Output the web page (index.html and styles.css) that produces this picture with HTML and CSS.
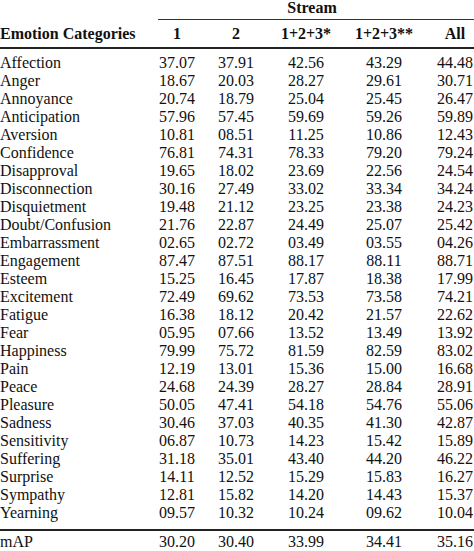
FILE: index.html
```html
<!DOCTYPE html>
<html>
<head>
<meta charset="utf-8">
<link rel="stylesheet" href="styles.css">
</head>
<body>
<div class="frame">
<table class="results">
  <colgroup>
    <col class="c0"><col class="c1"><col class="c2"><col class="c3"><col class="c4"><col class="c5">
  </colgroup>
  <thead>
    <tr class="group-row">
      <th class="blank"></th>
      <th class="group" colspan="5">Stream</th>
    </tr>
    <tr class="head-row">
      <th class="cat">Emotion Categories</th>
      <th>1</th>
      <th>2</th>
      <th>1+2+3*</th>
      <th>1+2+3**</th>
      <th>All</th>
    </tr>
  </thead>
  <tbody class="data">
    <tr class="first"><td class="cat">Affection</td><td>37.07</td><td>37.91</td><td>42.56</td><td>43.29</td><td>44.48</td></tr>
    <tr><td class="cat">Anger</td><td>18.67</td><td>20.03</td><td>28.27</td><td>29.61</td><td>30.71</td></tr>
    <tr><td class="cat">Annoyance</td><td>20.74</td><td>18.79</td><td>25.04</td><td>25.45</td><td>26.47</td></tr>
    <tr><td class="cat">Anticipation</td><td>57.96</td><td>57.45</td><td>59.69</td><td>59.26</td><td>59.89</td></tr>
    <tr><td class="cat">Aversion</td><td>10.81</td><td>08.51</td><td>11.25</td><td>10.86</td><td>12.43</td></tr>
    <tr><td class="cat">Confidence</td><td>76.81</td><td>74.31</td><td>78.33</td><td>79.20</td><td>79.24</td></tr>
    <tr><td class="cat">Disapproval</td><td>19.65</td><td>18.02</td><td>23.69</td><td>22.56</td><td>24.54</td></tr>
    <tr><td class="cat">Disconnection</td><td>30.16</td><td>27.49</td><td>33.02</td><td>33.34</td><td>34.24</td></tr>
    <tr><td class="cat">Disquietment</td><td>19.48</td><td>21.12</td><td>23.25</td><td>23.38</td><td>24.23</td></tr>
    <tr><td class="cat">Doubt/Confusion</td><td>21.76</td><td>22.87</td><td>24.49</td><td>25.07</td><td>25.42</td></tr>
    <tr><td class="cat">Embarrassment</td><td>02.65</td><td>02.72</td><td>03.49</td><td>03.55</td><td>04.26</td></tr>
    <tr><td class="cat">Engagement</td><td>87.47</td><td>87.51</td><td>88.17</td><td>88.11</td><td>88.71</td></tr>
    <tr><td class="cat">Esteem</td><td>15.25</td><td>16.45</td><td>17.87</td><td>18.38</td><td>17.99</td></tr>
    <tr><td class="cat">Excitement</td><td>72.49</td><td>69.62</td><td>73.53</td><td>73.58</td><td>74.21</td></tr>
    <tr><td class="cat">Fatigue</td><td>16.38</td><td>18.12</td><td>20.42</td><td>21.57</td><td>22.62</td></tr>
    <tr><td class="cat">Fear</td><td>05.95</td><td>07.66</td><td>13.52</td><td>13.49</td><td>13.92</td></tr>
    <tr><td class="cat">Happiness</td><td>79.99</td><td>75.72</td><td>81.59</td><td>82.59</td><td>83.02</td></tr>
    <tr><td class="cat">Pain</td><td>12.19</td><td>13.01</td><td>15.36</td><td>15.00</td><td>16.68</td></tr>
    <tr><td class="cat">Peace</td><td>24.68</td><td>24.39</td><td>28.27</td><td>28.84</td><td>28.91</td></tr>
    <tr><td class="cat">Pleasure</td><td>50.05</td><td>47.41</td><td>54.18</td><td>54.76</td><td>55.06</td></tr>
    <tr><td class="cat">Sadness</td><td>30.46</td><td>37.03</td><td>40.35</td><td>41.30</td><td>42.87</td></tr>
    <tr><td class="cat">Sensitivity</td><td>06.87</td><td>10.73</td><td>14.23</td><td>15.42</td><td>15.89</td></tr>
    <tr><td class="cat">Suffering</td><td>31.18</td><td>35.01</td><td>43.40</td><td>44.20</td><td>46.22</td></tr>
    <tr><td class="cat">Surprise</td><td>14.11</td><td>12.52</td><td>15.29</td><td>15.83</td><td>16.27</td></tr>
    <tr><td class="cat">Sympathy</td><td>12.81</td><td>15.82</td><td>14.20</td><td>14.43</td><td>15.37</td></tr>
    <tr class="last"><td class="cat">Yearning</td><td>09.57</td><td>10.32</td><td>10.24</td><td>09.62</td><td>10.04</td></tr>
  </tbody>
  <tfoot>
    <tr class="total"><td class="cat">mAP</td><td>30.20</td><td>30.40</td><td>33.99</td><td>34.41</td><td>35.16</td></tr>
  </tfoot>
</table>
</div>
</body>
</html>
```

FILE: styles.css
```css
html, body {
  margin: 0;
  padding: 0;
  background: #ffffff;
}

.frame {
  width: 474px;
  height: 551px;
  overflow: hidden;
}

.results {
  border-collapse: separate;
  border-spacing: 0;
  table-layout: fixed;
  width: 478px;
  font-family: "Liberation Serif", "Times New Roman", serif;
  font-size: 16px;
  color: #111111;
}

.c0 { width: 158px; }
.c1 { width: 38px; }
.c2 { width: 80px; }
.c3 { width: 60px; }
.c4 { width: 96px; }
.c5 { width: 46px; }

.results th,
.results td {
  padding: 0;
  text-align: center;
  line-height: 18px;
  white-space: nowrap;
}

.results .cat {
  text-align: left;
}

.results th {
  font-weight: bold;
}

.group-row th {
  line-height: 14px;
  padding-top: 1px;
  padding-bottom: 4px;
}

.group-row .group {
  padding-right: 12px;
  border-bottom: 1px solid #333333;
}

.group-row .blank {
  padding-bottom: 5px;
}

.head-row th {
  padding-top: 5px;
  padding-bottom: 4px;
  border-bottom: 2px solid #222222;
}

.data .first td {
  padding-top: 5px;
}

.data .last td {
  padding-bottom: 7px;
  border-bottom: 2px solid #222222;
}

.total td {
  padding-top: 2px;
}
```
